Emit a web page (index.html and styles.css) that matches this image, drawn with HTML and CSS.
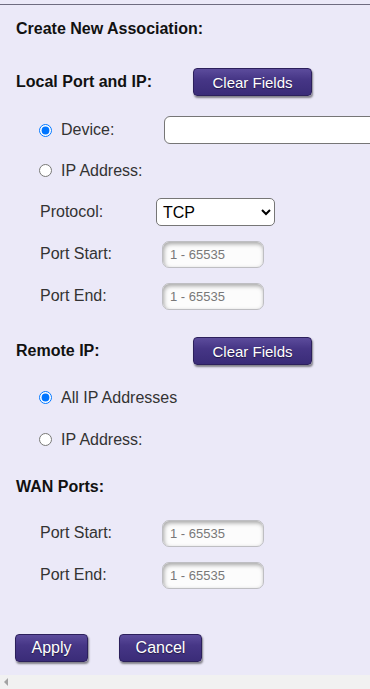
FILE: index.html
```html
<!DOCTYPE html>
<html lang="en">
  <head>
    <meta charset="UTF-8" />
    <meta name="viewport" content="width=device-width, initial-scale=1.0" />
    <title>Create New Association</title>
    <link rel="stylesheet" href="styles.css">
  </head>
  <body>
    <div class="frame">
      <div class="title">Create New Association:</div>

      <div class="section section-local">
        <div class="head">
          <span class="head-label">Local Port and IP:</span>
          <button class="btn btn-clear">Clear Fields</button>
        </div>
        <div class="fields">
          <div class="field field-first">
            <label class="field-label radio-label">
              <input type="radio" name="local-type" checked />
              <span>Device:</span>
            </label>
            <input class="text-input device-input" type="text" />
          </div>
          <div class="field">
            <label class="field-label radio-label">
              <input type="radio" name="local-type" />
              <span>IP Address:</span>
            </label>
          </div>
          <div class="field">
            <span class="field-label">Protocol:</span>
            <select class="proto-select">
              <option>TCP</option>
              <option>UDP</option>
              <option>Both</option>
            </select>
          </div>
          <div class="field">
            <span class="field-label">Port Start:</span>
            <input class="port-input" type="text" placeholder="1 - 65535" />
          </div>
          <div class="field">
            <span class="field-label">Port End:</span>
            <input class="port-input" type="text" placeholder="1 - 65535" />
          </div>
        </div>
      </div>

      <div class="section section-remote">
        <div class="head">
          <span class="head-label">Remote IP:</span>
          <button class="btn btn-clear">Clear Fields</button>
        </div>
        <div class="fields">
          <div class="field">
            <label class="radio-label">
              <input type="radio" name="remote-type" checked />
              <span>All IP Addresses</span>
            </label>
          </div>
          <div class="field">
            <label class="radio-label">
              <input type="radio" name="remote-type" />
              <span>IP Address:</span>
            </label>
          </div>
        </div>
      </div>

      <div class="section section-wan">
        <div class="head">
          <span class="head-label">WAN Ports:</span>
        </div>
        <div class="fields">
          <div class="field">
            <span class="field-label">Port Start:</span>
            <input class="port-input" type="text" placeholder="1 - 65535" />
          </div>
          <div class="field">
            <span class="field-label">Port End:</span>
            <input class="port-input" type="text" placeholder="1 - 65535" />
          </div>
        </div>
      </div>

      <div class="actions">
        <button class="btn btn-apply">Apply</button>
        <button class="btn btn-cancel">Cancel</button>
      </div>
    </div>

    <div class="h-scrollbar"><span class="h-scrollbar-arrow"></span></div>
  </body>
</html>
```

FILE: styles.css
```css
html,
body {
  margin: 0px;
  height: 100%;
  overflow: hidden;
}

body {
  background-color: rgb(235, 233, 248);
  font-family: 'Liberation Sans', Arial, sans-serif;
  color: rgb(51, 51, 51);
  padding-top: 4px;
  box-sizing: border-box;
}

.frame {
  border-top: 1px solid rgb(110, 108, 128);
  padding: 3px 0px 0px 16px;
}

.title,
.head {
  height: 42px;
  display: flex;
  align-items: center;
  font-size: 16px;
  font-weight: bold;
  color: rgb(17, 17, 17);
}

.head-label {
  width: 177px;
}

.section-local {
  margin-top: 11px;
}

.section-remote {
  margin-top: 13px;
}

.section-wan {
  margin-top: 6px;
}

.fields {
  margin-top: 4px;
  padding-left: 24px;
}

.field {
  height: 42px;
  display: flex;
  align-items: center;
  font-size: 16px;
}

.field-first {
  padding-top: 3px;
  height: 39px;
}

.field-label {
  width: 116px;
  flex-shrink: 0;
}

.radio-label {
  display: flex;
  align-items: center;
  padding-top: 1px;
}

.radio-label > input {
  width: 13px;
  height: 13px;
  margin: 0px 9px 0px -1px;
}

/* inputs */

.text-input {
  box-sizing: border-box;
  height: 28px;
  width: 230px;
  border: 1px solid rgb(118, 118, 118);
  border-radius: 6px;
  background-color: white;
  flex-shrink: 0;
}

.device-input {
  margin-left: 8px;
}

.proto-select {
  box-sizing: border-box;
  width: 119px;
  height: 28px;
  font-family: 'Liberation Sans', Arial, sans-serif;
  font-size: 16px;
  color: black;
  border: 1px solid rgb(118, 118, 118);
  border-radius: 5px;
  background-color: white;
  padding: 0px 2px;
}

.port-input {
  box-sizing: border-box;
  width: 102px;
  height: 27px;
  margin-left: 6px;
  padding: 0px 7px;
  font-family: 'Liberation Sans', Arial, sans-serif;
  font-size: 13px;
  border: 1px solid rgb(190, 190, 194);
  border-radius: 7px;
  background-color: rgb(252, 252, 252);
  box-shadow: inset 1px 2px 4px rgba(0, 0, 0, 0.35);
}

.port-input::placeholder {
  color: rgb(120, 120, 120);
}

/* buttons */

.btn {
  box-sizing: border-box;
  height: 28px;
  padding: 0px;
  font-family: 'Liberation Sans', Arial, sans-serif;
  font-size: 16px;
  color: white;
  text-shadow: 0px 1px 1px rgba(0, 0, 0, 0.5);
  background: linear-gradient(rgb(92, 76, 156), rgb(70, 54, 134) 40%, rgb(58, 44, 120));
  border: 1px solid rgb(44, 32, 92);
  border-radius: 4px;
  box-shadow: 1px 2px 2px rgba(0, 0, 0, 0.45);
  cursor: pointer;
}

.btn-clear {
  width: 119px;
  font-size: 15px;
  font-weight: normal;
}

.actions {
  height: 42px;
  margin-top: 31px;
  display: flex;
  align-items: center;
  gap: 31px;
  margin-left: -1px;
}

.btn-apply {
  width: 73px;
}

.btn-cancel {
  width: 83px;
}

/* fake window scrollbar */

.h-scrollbar {
  position: fixed;
  left: 0px;
  right: 0px;
  bottom: 0px;
  height: 14px;
  background-color: rgb(241, 241, 241);
}

.h-scrollbar-arrow {
  position: absolute;
  left: 4px;
  top: 3px;
  width: 0px;
  height: 0px;
  border-top: 4px solid transparent;
  border-bottom: 4px solid transparent;
  border-right: 4px solid rgb(163, 163, 163);
}
```
